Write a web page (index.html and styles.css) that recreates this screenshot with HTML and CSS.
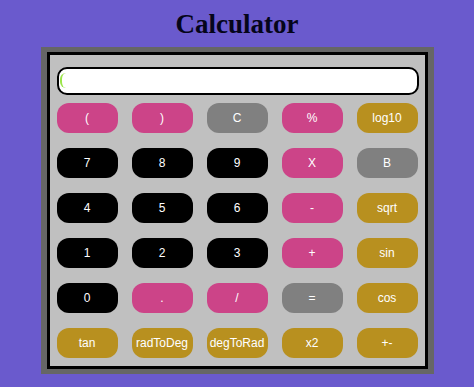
FILE: index.html
```html
<!DOCTYPE html>
<html>
<head>
<meta charset="utf-8">
<link rel="stylesheet" href="styles.css">
</head>
<body>
<h1 class="title">Calculator</h1>
<div class="frame">
  <div class="calc">
    <div class="screen">
      <input class="display" type="text" value="">
      <span class="caret"></span>
    </div>
    <div class="keys">
      <button class="key pink">(</button>
      <button class="key pink">)</button>
      <button class="key gray">C</button>
      <button class="key pink">%</button>
      <button class="key gold">log10</button>

      <button class="key black">7</button>
      <button class="key black">8</button>
      <button class="key black">9</button>
      <button class="key pink">X</button>
      <button class="key gray">B</button>

      <button class="key black">4</button>
      <button class="key black">5</button>
      <button class="key black">6</button>
      <button class="key pink">-</button>
      <button class="key gold">sqrt</button>

      <button class="key black">1</button>
      <button class="key black">2</button>
      <button class="key black">3</button>
      <button class="key pink">+</button>
      <button class="key gold">sin</button>

      <button class="key black">0</button>
      <button class="key pink">.</button>
      <button class="key pink">/</button>
      <button class="key gray">=</button>
      <button class="key gold">cos</button>

      <button class="key gold">tan</button>
      <button class="key gold">radToDeg</button>
      <button class="key gold">degToRad</button>
      <button class="key gold">x2</button>
      <button class="key gold">+-</button>
    </div>
  </div>
</div>
</body>
</html>
```
FILE: styles.css
```css
html, body {
  margin: 0;
  padding: 0;
}
body {
  background: #6a5acd;
  font-family: "Liberation Serif", "Times New Roman", serif;
}
.title {
  margin: 9px 0 7px;
  font-size: 27px;
  line-height: 31px;
  font-weight: bold;
  text-align: center;
  color: #05051a;
}
.frame {
  box-sizing: border-box;
  width: 393px;
  margin: 0 auto;
  padding: 5px 6px 5px 6px;
  background: #666666;
}
.calc {
  border: 3px solid #000;
  background: #c0c0c0;
  padding: 12px 7px 8px 7px;
}
.screen {
  position: relative;
  margin: 0 0 8px 0;
}
.display {
  display: block;
  box-sizing: border-box;
  width: 362px;
  height: 28px;
  margin: 0;
  padding: 0 6px;
  border: 2px solid #000;
  border-radius: 10px;
  background: #fff;
  outline: none;
  font-family: "Liberation Sans", Arial, sans-serif;
  font-size: 14px;
}
.caret {
  position: absolute;
  left: 3px;
  top: 6px;
  width: 6px;
  height: 15px;
  box-sizing: border-box;
  border-left: 2px solid #9be54a;
  border-radius: 7px 0 0 7px;
}
.keys {
  display: grid;
  grid-template-columns: repeat(5, 61px);
  column-gap: 14px;
  row-gap: 15px;
}
.key {
  height: 30px;
  margin: 0;
  padding: 0;
  border: none;
  border-radius: 12px;
  color: #fff;
  font-family: "Liberation Sans", Arial, sans-serif;
  font-size: 12px;
  text-align: center;
}
.pink { background: #cc4488; }
.gray { background: #808080; }
.gold { background: #b8901f; }
.black { background: #000; }
```
